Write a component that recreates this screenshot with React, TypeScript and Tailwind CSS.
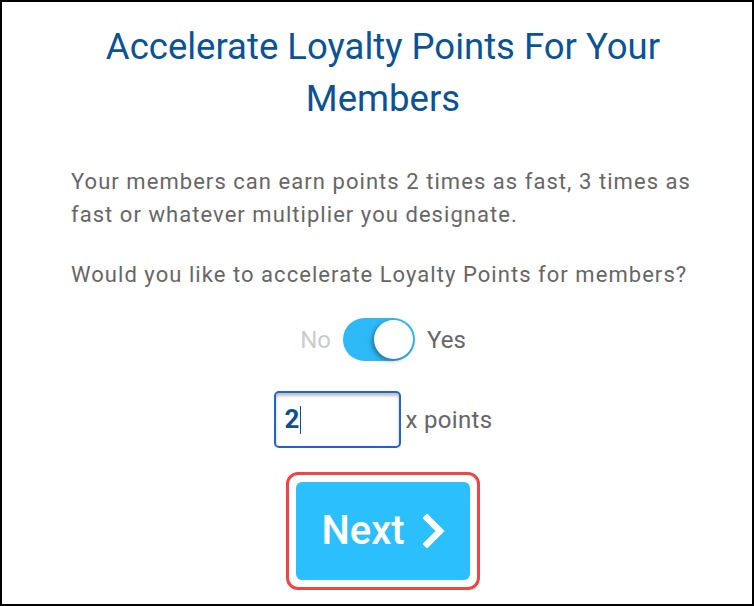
export default function App() {
  return (
    <div
      className="w-[754px] h-[606px] border-2 border-black bg-white overflow-hidden"
      style={{ fontFamily: "Roboto, 'Open Sans', sans-serif" }}
    >
      <div className="ml-[68px] w-[626px] pt-[19px]">
        {/* Heading */}
        <h1 className="text-center text-[36.5px] leading-[52px] text-[#0b5394]">
          Accelerate Loyalty Points For Your Members
        </h1>

        {/* Copy */}
        <p className="mt-[40px] ml-[1px] text-[22px] leading-[33px] tracking-[1.05px] text-[#666666]">
          Your members can earn points 2 times as fast, 3 times as
          <br />
          fast or whatever multiplier you designate.
        </p>
        <p className="mt-[27px] ml-[1px] text-[22px] leading-[33px] tracking-[1.05px] text-[#666666]">
          Would you like to accelerate Loyalty Points for members?
        </p>

        {/* Toggle */}
        <div className="mt-[27px] flex items-center justify-center gap-[12px] text-[24px]">
          <span className="text-[#cccccc]">No</span>
          <div className="relative w-[72px] h-[43px] rounded-full bg-[#2db8f6]">
            <div className="absolute right-[2px] top-[2px] w-[39px] h-[39px] rounded-full bg-white shadow-[-2px_2px_4px_rgba(0,0,0,0.35)]" />
          </div>
          <span className="text-[#666666]">Yes</span>
        </div>

        {/* Multiplier input */}
        <div className="mt-[30px] flex items-center justify-center gap-[5px]">
          <div className="w-[127px] h-[57px] border-2 border-[#1f66cc] rounded-[5px] shadow-[inset_0_3px_3px_rgba(0,0,0,0.25)] flex items-center pl-[9px]">
            <span className="text-[26px] font-bold text-[#0e4f8e]">2</span>
            <span className="w-px h-[28px] bg-[#0e4f8e]" />
          </div>
          <span className="text-[24px] tracking-[0.3px] text-[#666666]">x points</span>
        </div>

        {/* Next */}
        <div className="mt-[24px] flex justify-center">
          <div className="border-[3px] border-[#ef4545] rounded-[12px] p-[7px]">
            <button className="w-[174px] h-[98px] rounded-[6px] bg-[#2bbffe] flex items-center justify-center gap-[18px] text-white text-[40px] font-medium">
              Next
              <svg width="22" height="34" viewBox="0 0 22 34" fill="none">
                <polyline points="4,4 17,17 4,30" stroke="white" strokeWidth="6.5" strokeLinecap="square" strokeLinejoin="miter" />
              </svg>
            </button>
          </div>
        </div>
      </div>
    </div>
  )
}
